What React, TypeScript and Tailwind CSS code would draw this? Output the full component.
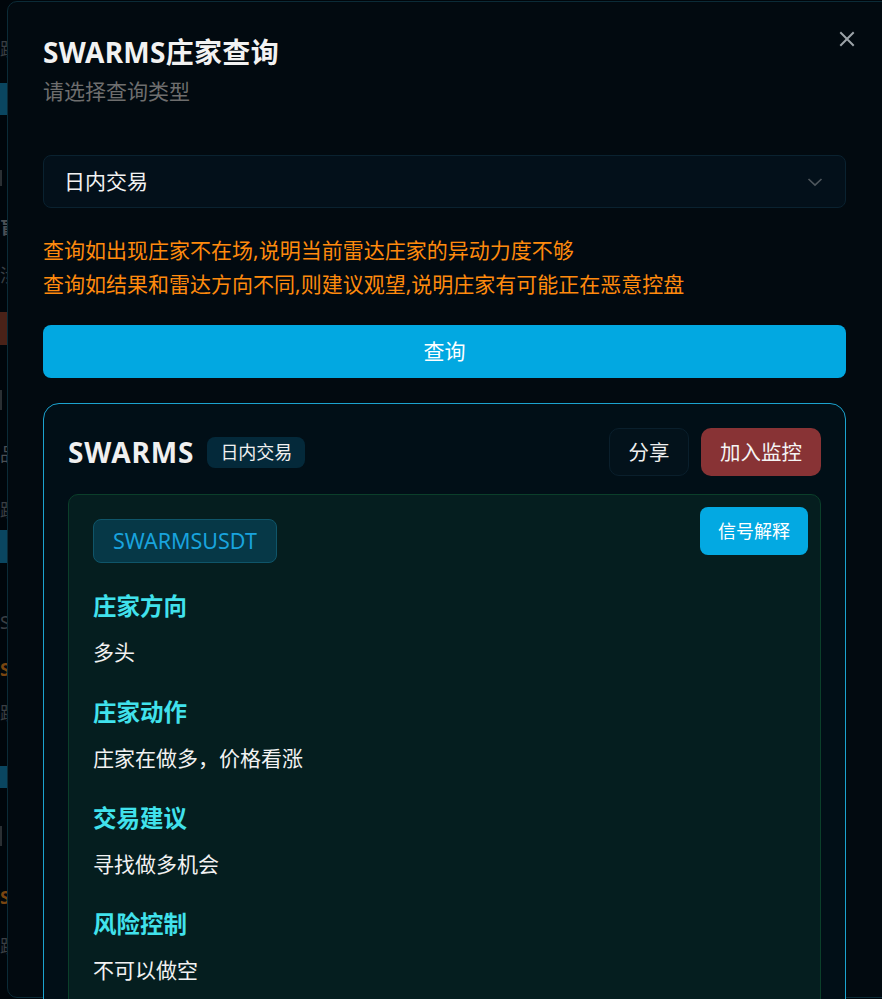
const font = { fontFamily: '"Noto Sans", "Noto Sans CJK SC", sans-serif' };

const sections = [
  { title: "庄家方向", text: "多头" },
  { title: "庄家动作", text: "庄家在做多，价格看涨" },
  { title: "交易建议", text: "寻找做多机会" },
  { title: "风险控制", text: "不可以做空" },
];

// the page behind the dialog: only a thin strip shows on the left
const BackdropPage = () => {
  return (
    <div className="flex flex-col w-[40px] pt-[14px] text-[18px] leading-none text-[#3a3f44]">
      <div className="h-[26px] mt-[26px]">跳</div>
      <div className="h-[32px] mt-[17px] bg-[#0a4660]" />
      <div className="h-[16px] mt-[55px] w-[2px] bg-[#2a2f33]" />
      <div className="h-[24px] mt-[32px] font-bold text-[#4a4f54]">盲</div>
      <div className="h-[24px] mt-[24px]">涉</div>
      <div className="h-[33px] mt-[22px] bg-[#4a2218]" />
      <div className="h-[20px] mt-[45px] w-[2px] bg-[#2a2f33]" />
      <div className="h-[24px] mt-[35px] text-[#4a4f54]">品</div>
      <div className="h-[24px] mt-[32px]">跳</div>
      <div className="h-[33px] mt-[5px] bg-[#0a4660]" />
      <div className="h-[20px] mt-[50px]">S</div>
      <div className="h-[14px] mt-[27px] font-bold text-[#7a4510]">S</div>
      <div className="h-[24px] mt-[30px]">跳</div>
      <div className="h-[22px] mt-[38px] bg-[#0a4660]" />
      <div className="h-[20px] mt-[38px] w-[2px] bg-[#2a2f33]" />
      <div className="h-[14px] mt-[42px] font-bold text-[#7a4510]">S</div>
      <div className="h-[24px] mt-[35px]">跳</div>
    </div>
  );
};

const Section = ({ title, text }: { title: string; text: string }) => {
  return (
    <div>
      <h3 className="text-[23.5px] leading-[32px] font-bold text-[#41e2ec] mb-[14px]">{title}</h3>
      <p className="text-[21px] leading-[32px] text-[#f2f2f2]">{text}</p>
    </div>
  );
};

const ResultCard = () => {
  return (
    <div className="mt-[25px] rounded-[16px] border border-[#1ba3cf] bg-[#010f17] px-[24px] pt-[24px] pb-[40px]">
      <div className="flex items-center justify-between h-[48px]">
        <div className="flex items-center gap-[13px]">
          <span className="text-[28px] font-bold text-[#f0f0f0] tracking-[0.9px]">SWARMS</span>
          <span className="h-[31px] px-[13px] flex items-center rounded-[8px] bg-[#04293a] text-[18px] text-[#f0f0f0]">
            日内交易
          </span>
        </div>
        <div className="flex items-center gap-[12px]">
          <button className="h-[48px] w-[80px] rounded-[10px] border border-[#0a1f2c] bg-[#03121b] text-[20.5px] text-[#f0f0f0]">
            分享
          </button>
          <button className="h-[48px] w-[120px] rounded-[10px] bg-[#883335] text-[20.5px] text-[#f4f4f4]">
            加入监控
          </button>
        </div>
      </div>

      <div className="relative mt-[18px] rounded-[10px] border border-[#0b3f2a] bg-[#051e1f] p-[24px] pb-[60px]">
        <button className="absolute top-[12px] right-[12px] h-[48px] w-[108px] rounded-[8px] bg-[#03a9e2] text-[18px] text-white">
          信号解释
        </button>
        <span className="inline-flex h-[44px] items-center px-[19px] rounded-[8px] border border-[#0f5569] bg-[#063847] text-[21.5px] text-[#19a3dd]">
          SWARMSUSDT
        </span>
        <div className="mt-[27px] flex flex-col gap-[28px]">
          {sections.map((s) => (
            <Section key={s.title} title={s.title} text={s.text} />
          ))}
        </div>
      </div>
    </div>
  );
};

export default function App() {
  return (
    <div className="relative w-[882px] h-[999px] overflow-hidden bg-[#00060b]" style={font}>
      <BackdropPage />

      <div className="absolute left-[7px] top-[1px] w-[900px] h-[997px] rounded-[10px] border border-[#0b2b37] bg-[#020a10] pl-[35px] pt-[32px]">
        <button className="absolute left-[831px] top-[29px] text-[#9ca3a8]">
          <svg width="16" height="16" viewBox="0 0 16 16" fill="none" stroke="currentColor" strokeWidth="2" strokeLinecap="square">
            <path d="M2 2L14 14M14 2L2 14" />
          </svg>
        </button>

        <div className="w-[803px]">
          <h2 className="text-[28px] leading-[36px] font-bold text-[#f2f2f2] tracking-[0.3px]">SWARMS庄家查询</h2>
          <p className="mt-[7px] text-[21px] leading-[28px] text-[#6e6e6e]">请选择查询类型</p>

          <div className="mt-[50px] h-[53px] flex items-center justify-between rounded-[8px] border border-[#0a2230] bg-[#03101a] pl-[20px] pr-[22px]">
            <span className="text-[21px] text-[#f2f2f2]">日内交易</span>
            <svg width="16" height="16" viewBox="0 0 16 16" fill="none" stroke="#4e565c" strokeWidth="1.7">
              <path d="M1.5 5L8 11L14.5 5" />
            </svg>
          </div>

          <div className="mt-[25px] text-[21px] leading-[34px] text-[#ff8a0d]">
            <p>查询如出现庄家不在场,说明当前雷达庄家的异动力度不够</p>
            <p>查询如结果和雷达方向不同,则建议观望,说明庄家有可能正在恶意控盘</p>
          </div>

          <button className="mt-[24px] w-full h-[53px] rounded-[8px] bg-[#02a8e1] text-[21px] text-white">
            查询
          </button>

          <ResultCard />
        </div>
      </div>
    </div>
  );
}
